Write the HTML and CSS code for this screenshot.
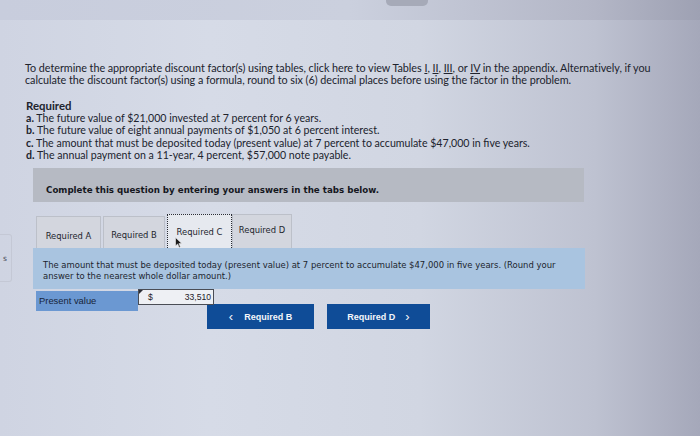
FILE: index.html
```html
<!DOCTYPE html>
<html>
<head>
<meta charset="utf-8">
<link rel="stylesheet" href="styles.css">
</head>
<body>
<div class="screen">
  <div class="topbar"><div class="pill"></div></div>
  <div class="layout">
    <div class="side"><div class="side-box">s</div></div>
    <div class="content">
      <p class="intro">To determine the appropriate discount factor(s) using tables, click here to view Tables <u>I</u>, <u>II</u>, <u>III</u>, or <u>IV</u> in the appendix. Alternatively, if you<br>calculate the discount factor(s) using a formula, round to six (6) decimal places before using the factor in the problem.</p>
      <div class="required">
        <div class="req-title">Required</div>
        <div><b>a.</b> The future value of $21,000 invested at 7 percent for 6 years.</div>
        <div><b>b.</b> The future value of eight annual payments of $1,050 at 6 percent interest.</div>
        <div><b>c.</b> The amount that must be deposited today (present value) at 7 percent to accumulate $47,000 in five years.</div>
        <div><b>d.</b> The annual payment on a 11-year, 4 percent, $57,000 note payable.</div>
      </div>
      <div class="complete">Complete this question by entering your answers in the tabs below.</div>
      <div class="tabs">
        <div class="tab tab-a">Required A</div>
        <div class="tab tab-b">Required B</div>
        <div class="tab tab-c active">Required C</div>
        <div class="tab tab-d">Required D</div>
        <svg class="cursor" width="8" height="11" viewBox="0 0 8 11"><path d="M0.5 0.5 L0.5 9 L2.6 7 L4.2 10.4 L5.4 9.8 L3.9 6.6 L6.8 6.6 Z" fill="#1a1a1a" stroke="#f0f0f0" stroke-width="0.6"/></svg>
      </div>
      <div class="question">The amount that must be deposited today (present value) at 7 percent to accumulate $47,000 in five years. (Round your<br>answer to the nearest whole dollar amount.)</div>
      <div class="answer-row">
        <div class="pv-label">Present value</div>
        <div class="pv-input"><span class="corner"></span><span class="dollar">$</span><span class="amount">33,510</span></div>
      </div>
      <div class="nav">
        <div class="btn btn-prev"><span class="chev">&lsaquo;</span>Required B</div>
        <div class="btn btn-next">Required D<span class="chev">&rsaquo;</span></div>
      </div>
    </div>
  </div>
</div>
</body>
</html>
```
FILE: styles.css
```css
html, body {
  margin: 0;
  padding: 0;
}
body {
  width: 700px;
  height: 436px;
  overflow: hidden;
  font-family: Lato, "Liberation Sans", sans-serif;
  color: #20232d;
}
.screen {
  width: 700px;
  height: 436px;
  background: linear-gradient(90deg, #cfd4e2 0%, #d6dbe7 30%, #d1d6e2 60%, #bec2d1 85%, #a5a8ba 100%);
}
.topbar {
  height: 20px;
  background: linear-gradient(90deg, #c8cddd 0%, #cbd0de 50%, #b3b6c6 85%, #9ea1b3 100%);
}
.pill {
  margin-left: 386px;
  width: 42px;
  height: 6px;
  border-radius: 0 0 5px 5px;
  background: #a6aab8;
}
.layout {
  display: flex;
}
.side {
  width: 25px;
  flex: none;
}
.side-box {
  margin-top: 214px;
  width: 12px;
  height: 48px;
  border: 1px solid #c4c8d5;
  border-left: none;
  border-radius: 0 3px 3px 0;
  font-family: "DejaVu Sans", sans-serif;
  font-size: 7.5px;
  line-height: 48px;
  color: #4a4e5a;
  padding-left: 3px;
  box-sizing: border-box;
}
.content {
  flex: 1;
}
.intro {
  margin: 42px 0 0 0;
  font-size: 10.8px;
  line-height: 12px;
  white-space: nowrap;
  letter-spacing: -0.04px;
}
.intro u {
  text-decoration-thickness: 0.6px;
}
.required {
  margin-top: 14px;
  margin-left: 1px;
  font-size: 10.6px;
  line-height: 12.2px;
  white-space: nowrap;
}
.req-title {
  font-weight: 700;
  font-size: 11.4px;
}
.required b {
  font-weight: 700;
}
.complete {
  margin: 7px 0 0 8px;
  width: 551px;
  height: 34px;
  box-sizing: border-box;
  padding: 17px 0 0 13px;
  background: #b6bac3;
  font-family: "DejaVu Sans", sans-serif;
  font-weight: 700;
  font-size: 8.7px;
  line-height: 11px;
  color: #15171d;
}
.tabs {
  position: relative;
  margin: 14px 0 0 11px;
  display: flex;
  align-items: flex-end;
  height: 32px;
}
.tab {
  box-sizing: border-box;
  height: 32px;
  padding-top: 14px;
  text-align: center;
  font-family: "DejaVu Sans", sans-serif;
  font-size: 8.4px;
  line-height: 11px;
  color: #22252d;
  background: #d3d6de;
  border: 1px solid #bcc0c9;
  border-bottom: none;
  white-space: nowrap;
}
.tab-a { width: 65px; margin-right: 2px; }
.tab-b { width: 62px; margin-right: 2px; padding-top: 13px; }
.tab-c { width: 65px; height: 34px; padding-top: 12px; }
.tab-d { width: 60px; height: 34px; padding-top: 10px; }
.tab.active {
  background: #e6e9ef;
  border: 1px dotted #2a2d35;
  border-bottom: none;
}
.cursor {
  position: absolute;
  left: 139px;
  top: 21px;
}
.question {
  margin-left: 8px;
  width: 552px;
  box-sizing: border-box;
  padding: 12px 0 7px 10px;
  background: #a9c4e0;
  font-family: "DejaVu Sans", sans-serif;
  font-size: 8.45px;
  line-height: 11px;
  color: #20242e;
  white-space: nowrap;
}
.answer-row {
  margin-left: 11px;
  display: flex;
  align-items: flex-start;
}
.pv-label {
  width: 102px;
  height: 20px;
  margin-top: 2px;
  box-sizing: border-box;
  padding: 5px 0 0 3px;
  background: #6b98d2;
  font-family: "Liberation Sans", Arial, sans-serif;
  font-size: 9.4px;
  line-height: 10px;
  color: #17243a;
}
.pv-input {
  position: relative;
  width: 76px;
  height: 16px;
  box-sizing: border-box;
  border: 1px solid #4a4d55;
  background: #eef0f4;
  display: flex;
  align-items: center;
  justify-content: space-between;
  padding: 0 2px 0 9px;
  font-family: "Liberation Sans", Arial, sans-serif;
  font-size: 8.6px;
  color: #1d2029;
}
.corner {
  position: absolute;
  left: 0;
  top: 0;
  width: 0;
  height: 0;
  border-top: 4px solid #2a2d35;
  border-right: 4px solid transparent;
}
.nav {
  margin: -7px 0 0 182px;
  display: flex;
  gap: 13px;
}
.btn {
  height: 25px;
  box-sizing: border-box;
  display: flex;
  align-items: center;
  justify-content: center;
  background: #0f4c97;
  color: #f4f6fa;
  font-family: "Liberation Sans", Arial, sans-serif;
  font-weight: 700;
  font-size: 9px;
}
.btn-prev { width: 107px; }
.btn-next { width: 103px; }
.chev {
  font-size: 13px;
  font-weight: 400;
  line-height: 10px;
}
.btn-prev .chev { margin-right: 11px; }
.btn-next .chev { margin-left: 10px; }
```
